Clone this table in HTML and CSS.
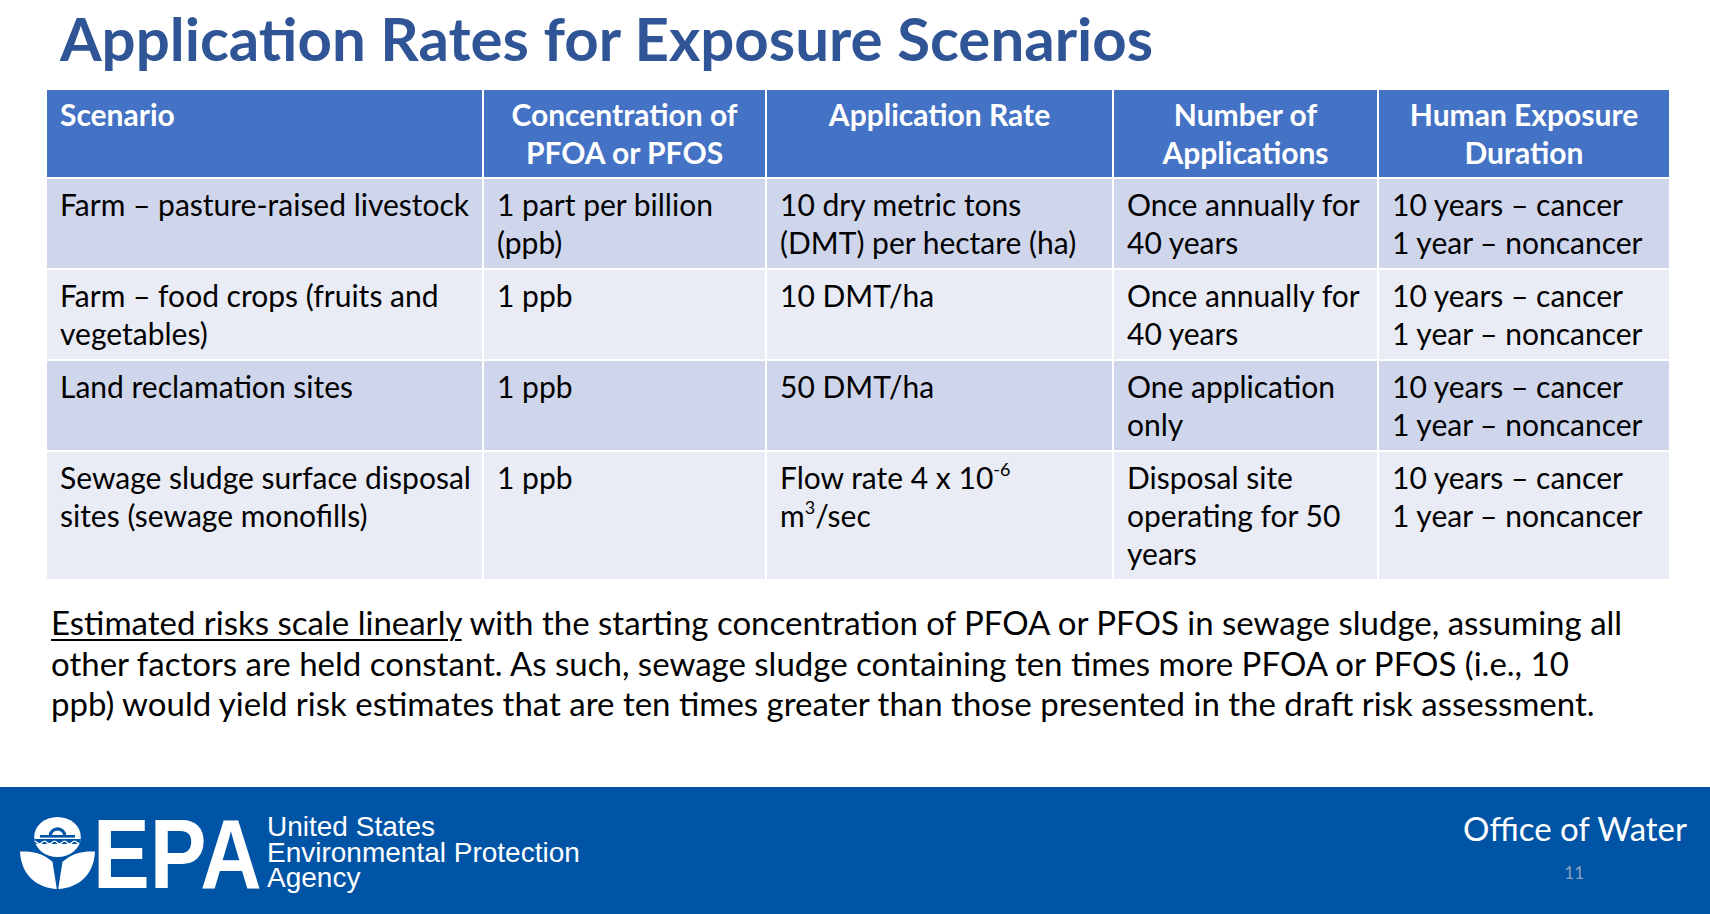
FILE: index.html
```html
<!DOCTYPE html>
<html lang="en">
<head>
<meta charset="utf-8">
<title>Application Rates for Exposure Scenarios</title>
<link rel="stylesheet" href="styles.css">
</head>
<body>
<div class="slide">
  <h1 class="title">Application Rates for Exposure Scenarios</h1>
  <table class="grid">
    <colgroup>
      <col class="c1"><col class="c2"><col class="c3"><col class="c4"><col class="c5">
    </colgroup>
    <thead>
      <tr>
        <th class="left">Scenario</th>
        <th>Concentration of<br>PFOA or PFOS</th>
        <th>Application Rate</th>
        <th>Number of<br>Applications</th>
        <th>Human Exposure<br>Duration</th>
      </tr>
    </thead>
    <tbody>
      <tr class="odd">
        <td>Farm – pasture-raised livestock</td>
        <td>1 part per billion<br>(ppb)</td>
        <td>10 dry metric tons<br>(DMT) per hectare (ha)</td>
        <td>Once annually for<br>40 years</td>
        <td>10 years – cancer<br>1 year – noncancer</td>
      </tr>
      <tr class="even">
        <td>Farm – food crops (fruits and<br>vegetables)</td>
        <td>1 ppb</td>
        <td>10 DMT/ha</td>
        <td>Once annually for<br>40 years</td>
        <td>10 years – cancer<br>1 year – noncancer</td>
      </tr>
      <tr class="odd">
        <td>Land reclamation sites</td>
        <td>1 ppb</td>
        <td>50 DMT/ha</td>
        <td>One application<br>only</td>
        <td>10 years – cancer<br>1 year – noncancer</td>
      </tr>
      <tr class="even">
        <td>Sewage sludge surface disposal<br>sites (sewage monofills)</td>
        <td>1 ppb</td>
        <td>Flow rate 4 x 10<sup>-6</sup><br>m<sup>3</sup>/sec</td>
        <td>Disposal site<br>operating for 50<br>years</td>
        <td>10 years – cancer<br>1 year – noncancer</td>
      </tr>
    </tbody>
  </table>
  <p class="note"><u>Estimated risks scale linearly</u> with the starting concentration of PFOA or PFOS in sewage sludge, assuming all<br>other factors are held constant. As such, sewage sludge containing ten times more PFOA or PFOS (i.e., 10<br>ppb) would yield risk estimates that are ten times greater than those presented in the draft risk assessment.</p>
  <footer class="footer">
    <div class="brand">
      <svg class="mark" width="85" height="80" viewBox="0 0 85 80" aria-hidden="true">
        <defs>
          <clipPath id="head"><ellipse cx="42.5" cy="24" rx="23.3" ry="20"/></clipPath>
        </defs>
        <ellipse cx="42.5" cy="24" rx="23.3" ry="20" fill="#fff"/>
        <g clip-path="url(#head)">
          <path d="M35.3 23 A7.2 7.2 0 0 1 49.7 23" fill="none" stroke="#0054a6" stroke-width="3.2"/>
          <rect x="25" y="22" width="35" height="2.6" fill="#0054a6"/>
          <rect x="15" y="26" width="56" height="5" fill="#0054a6"/>
          <path d="M17 29.5 q2.5 -2.6 5 0 t5 0 t5 0 t5 0 t5 0 t5 0 t5 0 t5 0 t5 0 t5 0" fill="none" stroke="#fff" stroke-width="1.3"/>
        </g>
        <path d="M5 38.5 C14 38 24 39.5 31 44 C34 46 36 47.5 37.5 49 L41.8 76 C22 75 6 62 5 38.5 Z" fill="#fff"/>
        <path d="M80 38.5 C71 38 61 39.5 54 44 C51 46 49 47.5 47.5 49 L43.2 76 C63 75 79 62 80 38.5 Z" fill="#fff"/>
      </svg>
      <div class="epa-box"><span class="epa">EPA</span></div>
      <div class="agency">
        <div class="agency-line">United States</div>
        <div class="agency-line">Environmental Protection</div>
        <div class="agency-line">Agency</div>
      </div>
    </div>
    <div class="office">
      <div class="office-name">Office of Water</div>
      <div class="pagenum">11</div>
    </div>
  </footer>
</div>
</body>
</html>
```
FILE: styles.css
```css
html, body {
  margin: 0;
  padding: 0;
  background: #ffffff;
}
.slide {
  width: 1710px;
  height: 914px;
  display: flex;
  flex-direction: column;
  overflow: hidden;
  font-family: Lato, "Open Sans", sans-serif;
  color: #000;
}
.title {
  margin: 3px 0 0 60px;
  font-family: Lato, sans-serif;
  font-weight: 700;
  font-size: 60px;
  line-height: 71px;
  color: #2f5597;
  white-space: nowrap;
}
.grid {
  margin: 14px 0 0 45px;
  width: 1624px;
  table-layout: fixed;
  border-collapse: collapse;
  font-size: 30px;
  line-height: 38px;
}
.c1 { width: 437px; }
.c2 { width: 283px; }
.c3 { width: 347px; }
.c4 { width: 265px; }
.c5 { width: 292px; }
.grid th, .grid td {
  border: 2px solid #fff;
  padding: 6px 13px 7px 13px;
  vertical-align: top;
  white-space: nowrap;
}
.grid th {
  background: #4472c4;
  color: #fff;
  font-weight: 700;
  text-align: center;
  padding-top: 5px;
  padding-bottom: 6px;
}
.grid th.left { text-align: left; }
.grid td { font-weight: 400; }
.grid .odd td { background: #cfd5ea; }
.grid .even td { background: #e9ebf5; }
.grid sup {
  font-size: 0.6em;
  line-height: 0;
  vertical-align: 0.75em;
}
.note {
  margin: 21px 0 0 51px;
  font-size: 33px;
  line-height: 40.5px;
  white-space: nowrap;
}
.note u {
  text-decoration-thickness: 2px;
  text-underline-offset: 4px;
}
.footer {
  margin-top: auto;
  height: 127px;
  flex: 0 0 127px;
  background: #0054a6;
  display: flex;
  justify-content: space-between;
  align-items: flex-start;
  color: #fff;
}
.brand {
  display: flex;
  align-items: flex-start;
  padding: 26px 0 0 15px;
}
.mark {
  display: block;
  flex: none;
}
.epa-box {
  flex: none;
  width: 174px;
  margin: -8px 0 0 -7px;
}
.epa {
  display: block;
  width: max-content;
  font-family: "Liberation Sans", Arial, sans-serif;
  font-weight: 700;
  font-size: 98px;
  line-height: 98px;
  color: #fff;
  transform: scaleX(0.868);
  transform-origin: 0 0;
}
.agency {
  margin: 1px 0 0 0;
  font-family: "Liberation Sans", Arial, sans-serif;
  font-size: 28px;
  color: #fff;
}
.agency-line {
  height: 25.5px;
  line-height: 25.5px;
  white-space: nowrap;
}
.office {
  display: flex;
  flex-direction: column;
  align-items: flex-end;
  padding: 21px 23px 0 0;
}
.office-name {
  font-family: Lato, sans-serif;
  font-size: 33px;
  line-height: 40px;
  color: #fff;
}
.pagenum {
  margin-top: 15px;
  padding-right: 103px;
  font-family: Lato, sans-serif;
  font-size: 17px;
  line-height: 20px;
  color: #8ea2bf;
}
```
